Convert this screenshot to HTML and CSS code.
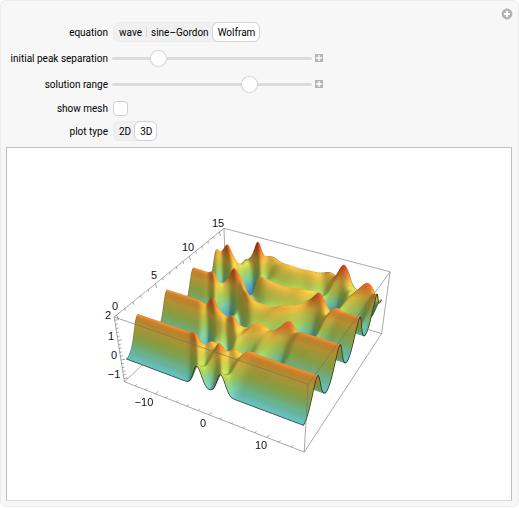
FILE: index.html
```html
<!DOCTYPE html>
<html lang="en">
<head>
<meta charset="utf-8">
<title>Wave equation explorer</title>
<link rel="stylesheet" href="styles.css">
</head>
<body>
<main class="panel">
  <button class="menu" type="button" aria-label="Options">
    <svg viewBox="0 0 12 12" width="12" height="12"><circle cx="6" cy="6" r="5.4" fill="#b3b3b3"/><path d="M6 3v6M3 6h6" stroke="#fff" stroke-width="2"/></svg>
  </button>
  <form class="controls">
    <span class="name" id="eq">equation</span>
    <div class="setter" role="group" aria-labelledby="eq">
      <button type="button">wave</button><button type="button" class="divided">sine–Gordon</button><button type="button" class="on" aria-pressed="true">Wolfram</button>
    </div>
    <label class="name" for="sep">initial peak separation</label>
    <div class="slide">
      <input id="sep" type="range" min="0" max="100" value="21">
      <button class="expand" type="button" aria-label="Show separation value"><svg viewBox="0 0 8 8" width="8" height="8"><path d="M0 0h8v8H0z" fill="#b5b5b5"/><path d="M4 1v6M1 4h6" stroke="#fff" stroke-width="1.4"/></svg></button>
    </div>
    <label class="name" for="range">solution range</label>
    <div class="slide">
      <input id="range" type="range" min="0" max="100" value="70">
      <button class="expand" type="button" aria-label="Show range value"><svg viewBox="0 0 8 8" width="8" height="8"><path d="M0 0h8v8H0z" fill="#b5b5b5"/><path d="M4 1v6M1 4h6" stroke="#fff" stroke-width="1.4"/></svg></button>
    </div>
    <label class="name" for="mesh">show mesh</label>
    <div class="tick"><input id="mesh" type="checkbox"></div>
    <span class="name" id="pt">plot type</span>
    <div class="setter" role="group" aria-labelledby="pt">
      <button type="button">2D</button><button type="button" class="on" aria-pressed="true">3D</button>
    </div>
  </form>
  <section class="output" aria-label="Solution surface">
    <div class="plot">
      <svg id="back" class="layer" viewBox="0 0 504 352"></svg>
      <canvas id="surface" class="layer" width="1008" height="704"></canvas>
      <svg id="front" class="layer" viewBox="0 0 504 352"></svg>
    </div>
  </section>
</main>
<script src="plot.js"></script>
</body>
</html>
```
FILE: styles.css
```css
* { box-sizing: border-box; }

body {
  margin: 0;
  background: #fff;
  font-family: Roboto, "Liberation Sans", sans-serif;
  font-size: 10px;
  font-weight: 400;
  color: #000;
}

.panel {
  position: relative;
  padding: 20px 6px 5px 5px;
  background: #f7f7f7;
  border: 1px solid #ebebeb;
  border-radius: 6px;
}

button {
  margin: 0;
  padding: 0;
  border: 0;
  background: none;
  font: inherit;
  color: inherit;
}

svg { display: block; }

.menu {
  position: absolute;
  top: 7px;
  right: 5px;
}

.controls {
  display: grid;
  grid-template-columns: 102px 1fr;
  grid-template-rows: 22px 30px 22px 26px 20px;
  column-gap: 4px;
  align-items: center;
  margin-bottom: 6px;
}

.name {
  justify-self: end;
  white-space: nowrap;
}

.setter {
  display: flex;
  justify-self: start;
  height: 20px;
  margin-left: 1px;
  background: #f0f0f0;
  border: 1px solid #ebebeb;
  border-radius: 6px;
}

.setter button {
  position: relative;
  padding: 1px 4px 0 5px;
}

.setter .divided::before {
  content: "";
  position: absolute;
  left: 0;
  top: 4px;
  bottom: 4px;
  border-left: 1px solid #d6d6d6;
}

.setter .on {
  margin: -1px;
  background: #fff;
  border: 1px solid #d2d2d2;
  border-radius: 6px;
}

.slide {
  display: flex;
  align-items: center;
  gap: 3px;
}

.slide input {
  appearance: none;
  width: 200px;
  height: 16px;
  margin: 0;
  background: none;
}

.slide input::-webkit-slider-runnable-track {
  height: 3px;
  background: #dcdcdc;
  border-radius: 2px;
}

.slide input::-webkit-slider-thumb {
  appearance: none;
  width: 15px;
  height: 15px;
  margin-top: -6px;
  background: #fff;
  border-radius: 50%;
  box-shadow: 0 0 1px 1px #d4d4d4;
}

.tick { display: flex; }

.tick input {
  appearance: none;
  width: 15px;
  height: 15px;
  margin: 0 0 0 1px;
  background: #fff;
  border: 1px solid #cfcfcf;
  border-radius: 4px;
}

.output {
  background: #fff;
  border: 1px solid #bfbfbf;
  border-bottom-color: #dadada;
}

.plot {
  position: relative;
  aspect-ratio: 504 / 352;
}

.layer {
  position: absolute;
  inset: 0;
  width: 100%;
  height: 100%;
}

.layer line {
  stroke: #6e6e6e;
  stroke-width: 0.6;
}

.layer text {
  font-family: "Liberation Sans", sans-serif;
  font-size: 11px;
  font-weight: 400;
  fill: #111;
  text-anchor: middle;
  dominant-baseline: central;
}
```
FILE: plot.js
```js
// Solves u_tt = u_xx + (1 - u^2)(1 + u) from two Gaussian peaks and draws u(x, t).
const L = 15.5;
const SEP = 2.05;
const Z_LOW = -1.17;
const Z_HIGH = 2.16;

const N = 620;
const STEPS = 620;
const dx = 2 * L / N;
const dt = L / STEPS;
const SKIP_X = 2;
const SKIP_T = 2;

function solve() {
  const force = u => (1 - u * u) * (1 + u);
  let now = new Float64Array(N + 1);
  for (let i = 0; i <= N; i++) {
    const x = -L + i * dx;
    now[i] = Math.exp(-((x - SEP) ** 2)) + Math.exp(-((x + SEP) ** 2));
  }
  const accel = (u, i) => {
    const a = u[i === 0 ? N - 1 : i - 1];
    const b = u[i === N ? 1 : i + 1];
    return (a - 2 * u[i] + b) / (dx * dx) + force(u[i]);
  };
  let before = now.map((v, i) => v + 0.5 * dt * dt * accel(now, i));
  const rows = [];
  for (let s = 0; s <= STEPS; s++) {
    if (s % SKIP_T === 0) rows.push({ t: s * dt, u: now });
    const next = now.map((v, i) => 2 * v - before[i] + dt * dt * accel(now, i));
    before = now;
    now = next;
  }
  return rows;
}

// Perspective camera looking at the centre of a 1 : 1 : 0.4 box.
const RIGHT = [0.8793, 0.4763, 0];
const UP = [-0.2815, 0.5198, 0.8067];
const AHEAD = [-0.3842, 0.7093, -0.5911];
const DIST = 3.384;
const SCALE = 663;
const CX = 252;
const CY = 178;
const dot = (a, b) => a[0] * b[0] + a[1] * b[1] + a[2] * b[2];

function project(p) {
  const d = DIST + dot(p, AHEAD);
  return [CX + SCALE * dot(p, RIGHT) / d, CY - SCALE * dot(p, UP) / d];
}

const box = (x, t, u) => [
  x / (2.08 * L),
  (t - L / 2) / (1.04 * L),
  ((u - Z_LOW) / (Z_HIGH - Z_LOW) - 0.5) * 0.4
];

const RAMP = [
  [70, 60, 160], [60, 110, 220], [80, 168, 208], [125, 212, 165],
  [178, 208, 84], [236, 196, 68], [236, 124, 44], [232, 40, 34]
];

function ramp(f) {
  const s = Math.max(0, Math.min(0.9999, f)) * (RAMP.length - 1);
  const k = Math.floor(s);
  return RAMP[k].map((c, j) => c + (RAMP[k + 1][j] - c) * (s - k));
}

function shade(n) {
  const c = [dot(n, RIGHT), dot(n, UP), -dot(n, AHEAD)];
  const lit = v => Math.max(0, v);
  return 0.54 + 0.22 * (lit((c[0] + c[2]) / 1.414) + lit((c[0] + c[1] + c[2]) / 1.732) + lit((c[1] + c[2]) / 1.414));
}

function drawSurface() {
  const ctx = document.getElementById("surface").getContext("2d");
  ctx.scale(2, 2);
  ctx.lineJoin = "round";
  ctx.lineCap = "round";
  const rows = solve();
  const pts = rows.map(r => {
    const out = [];
    for (let i = 0; i <= N; i += SKIP_X) {
      const b = box(-L + i * dx, r.t, r.u[i]);
      out.push({ b, s: project(b), u: r.u[i] });
    }
    return out;
  });
  const edge = (a, b) => {
    ctx.strokeStyle = "#2a2e24";
    ctx.lineWidth = 0.7;
    ctx.beginPath();
    ctx.moveTo(...a.s);
    ctx.lineTo(...b.s);
    ctx.stroke();
  };
  const last = pts[0].length - 2;
  for (let k = pts.length - 2; k >= 0; k--) {
    for (let i = 0; i <= last; i++) {
      const a = pts[k][i], b = pts[k][i + 1], c = pts[k + 1][i + 1], d = pts[k + 1][i];
      if (k === pts.length - 2) edge(d, c);
      if (i === 0) edge(a, d);
      const sx = (b.b[2] - a.b[2]) / (b.b[0] - a.b[0]);
      const sy = (d.b[2] - a.b[2]) / (d.b[1] - a.b[1]);
      const len = Math.hypot(sx, sy, 1);
      const light = shade([-sx / len, -sy / len, 1 / len]);
      const f = ((a.u + c.u) / 2 - Z_LOW) / (Z_HIGH - Z_LOW);
      const rgb = ramp(f).map(v => Math.min(255, Math.round(v * light)));
      const col = "rgb(" + rgb.join(",") + ")";
      ctx.fillStyle = col;
      ctx.strokeStyle = col;
      ctx.lineWidth = 0.4;
      ctx.beginPath();
      ctx.moveTo(...a.s);
      ctx.lineTo(...b.s);
      ctx.lineTo(...c.s);
      ctx.lineTo(...d.s);
      ctx.closePath();
      ctx.fill();
      ctx.stroke();
      if (i === last) edge(b, c);
      if (k === 0) edge(a, b);
    }
  }
}

const SVG = "http://www.w3.org/2000/svg";

function line(layer, a, b) {
  const el = document.createElementNS(SVG, "line");
  el.setAttribute("x1", a[0].toFixed(1));
  el.setAttribute("y1", a[1].toFixed(1));
  el.setAttribute("x2", b[0].toFixed(1));
  el.setAttribute("y2", b[1].toFixed(1));
  layer.append(el);
}

function label(layer, x, y, text) {
  const el = document.createElementNS(SVG, "text");
  el.setAttribute("x", Math.round(x));
  el.setAttribute("y", Math.round(y));
  el.textContent = text;
  layer.append(el);
}

function drawAxes() {
  const back = document.getElementById("back");
  const front = document.getElementById("front");
  const P = (x, y, z) => project([x / 2, y / 2, z / 5]);
  [[[-1, 1, 1], [1, 1, 1]], [[1, 1, 1], [1, 1, -1]], [[-1, 1, 1], [-1, 1, -1]],
   [[-1, 1, -1], [1, 1, -1]], [[-1, -1, -1], [-1, 1, -1]], [[1, -1, -1], [1, 1, -1]],
   [[-1, -1, 1], [-1, 1, 1]], [[-1, -1, 1], [-1, -1, -1]], [[-1, -1, -1], [1, -1, -1]]
  ].forEach(([a, b]) => line(back, P(...a), P(...b)));
  [[[-1, -1, 1], [1, -1, 1]], [[1, -1, 1], [1, 1, 1]], [[1, -1, 1], [1, -1, -1]]
  ].forEach(([a, b]) => line(front, P(...a), P(...b)));

  for (let x = -14; x <= 14; x += 2) {
    const b = box(x, 0, 0);
    const major = x % 10 === 0;
    const len = major ? 4 : 2.4;
    const p = project([b[0], -0.5, -0.2]);
    line(front, p, [p[0] + len * 0.8, p[1] - len * 0.6]);
    if (major) label(front, p[0] - (x < 0 ? 11 : 6), p[1] + 8, String(x).replace("-", "−"));
  }
  for (let t = 0; t <= 15; t++) {
    const b = box(0, t, 0);
    const major = t % 5 === 0;
    const p = project([-0.5, b[1], 0.2]);
    line(back, p, [p[0] + (major ? 1 : 0.6), p[1] + (major ? 4 : 2.4)]);
    if (major) label(back, p[0] - (t > 9 ? 1 : 2), p[1] - 9, String(t));
  }
  for (let i = -5; i <= 10; i++) {
    const b = box(0, 0, i / 5);
    const major = i % 5 === 0;
    const p = project([-0.5, -0.5, b[2]]);
    const len = major ? 4 : 2.4;
    line(back, p, [p[0] + len, p[1] - len * 0.2]);
    if (major) label(back, p[0] - (i < 0 ? 10 : 7), p[1] - 5, String(i / 5).replace("-", "−"));
  }
}

drawSurface();
drawAxes();
```
